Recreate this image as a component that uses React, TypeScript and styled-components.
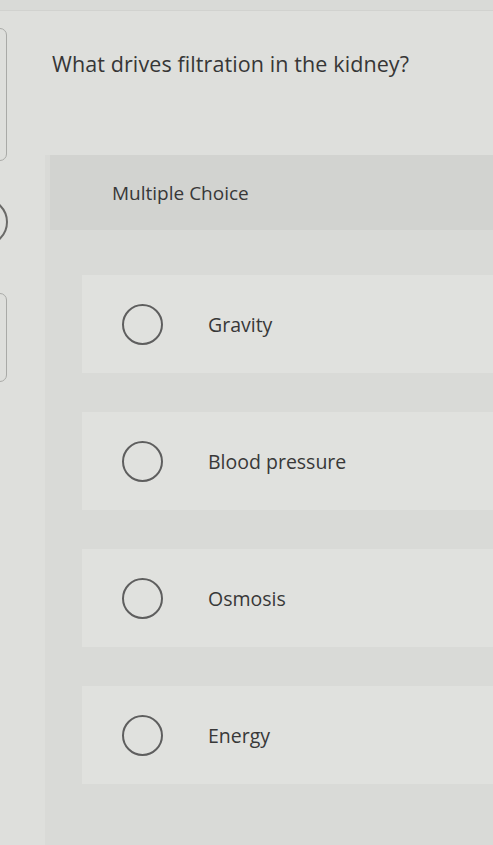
import React from 'react';
import styled, { createGlobalStyle } from 'styled-components';

const GlobalStyle = createGlobalStyle`
    html, body {
        margin: 0;
        padding: 0;
        background: #dcddda;
    }
    body {
        font-family: "Open Sans", "Liberation Sans", sans-serif;
        color: #3a3a3a;
        overflow: hidden;
    }
`;

const options = ['Gravity', 'Blood pressure', 'Osmosis', 'Energy'];

function App() {
    return (
        <>
            <GlobalStyle />
            <Screen>
                <TopStrip />
                <Body>
                    <Rail>
                        <RailCard height={133} top={17} />
                        <RailDot top={37} />
                        <RailCard height={89} top={47} />
                    </Rail>
                    <Main>
                        <QuestionBlock>
                            <Question>What drives filtration in the kidney?</Question>
                        </QuestionBlock>
                        <TypeBand>
                            <TypeLabel>Multiple Choice</TypeLabel>
                        </TypeBand>
                        <OptionList>
                            {options.map(o => (
                                <OptionCard key={o}>
                                    <Radio />
                                    <OptionText>{o}</OptionText>
                                </OptionCard>
                            ))}
                        </OptionList>
                    </Main>
                </Body>
            </Screen>
        </>
    );
}

const Screen = styled.div`
    width: 493px;
    height: 845px;
    display: flex;
    flex-direction: column;
    background: #dcddda;
    overflow: hidden;
`;

const TopStrip = styled.div`
    height: 10px;
    flex: 0 0 auto;
    background: #d9dad7;
    border-bottom: 1px solid #d1d2cf;
`;

const Body = styled.div`
    display: flex;
    flex: 1;
    min-height: 0;
`;

const Rail = styled.div`
    width: 45px;
    flex: 0 0 auto;
    display: flex;
    flex-direction: column;
    overflow: hidden;
    background: #dedfdc;
`;

const RailCard = styled.div<{ height: number; top: number }>`
    margin-left: -40px;
    margin-top: ${p => p.top}px;
    width: 47px;
    height: ${p => p.height}px;
    border: 1px solid #a9aaa7;
    border-radius: 7px;
    box-sizing: border-box;
    flex: 0 0 auto;
`;

const RailDot = styled.div<{ top: number }>`
    margin-left: -40px;
    margin-top: ${p => p.top}px;
    width: 48px;
    height: 48px;
    border: 2px solid #6a6a68;
    border-radius: 50%;
    box-sizing: border-box;
    flex: 0 0 auto;
`;

const Main = styled.div`
    flex: 1;
    display: flex;
    flex-direction: column;
    background: #d9dad7;
`;

const QuestionBlock = styled.div`
    height: 144px;
    padding: 38px 0 0 7px;
    box-sizing: border-box;
    background: #dedfdc;
`;

const Question = styled.div`
    font-size: 21.5px;
    font-weight: 500;
    letter-spacing: 0.1px;
    color: #363636;
`;

const TypeBand = styled.div`
    height: 75px;
    margin-left: 5px;
    display: flex;
    align-items: center;
    padding-left: 62px;
    background: #d2d3d0;
`;

const TypeLabel = styled.div`
    font-size: 19px;
    font-weight: 500;
    color: #383838;
`;

const OptionList = styled.div`
    display: flex;
    flex-direction: column;
    gap: 39px;
    padding: 45px 0 0 37px;
`;

const OptionCard = styled.div`
    height: 98px;
    display: flex;
    align-items: center;
    padding-left: 40px;
    background: #e0e1de;
`;

const Radio = styled.div`
    width: 41px;
    height: 41px;
    border: 2px solid #5e5e5e;
    border-radius: 50%;
    box-sizing: border-box;
    flex: 0 0 auto;
`;

const OptionText = styled.div`
    margin-left: 45px;
    font-size: 19.5px;
    font-weight: 500;
    color: #383838;
`;

export default App;
